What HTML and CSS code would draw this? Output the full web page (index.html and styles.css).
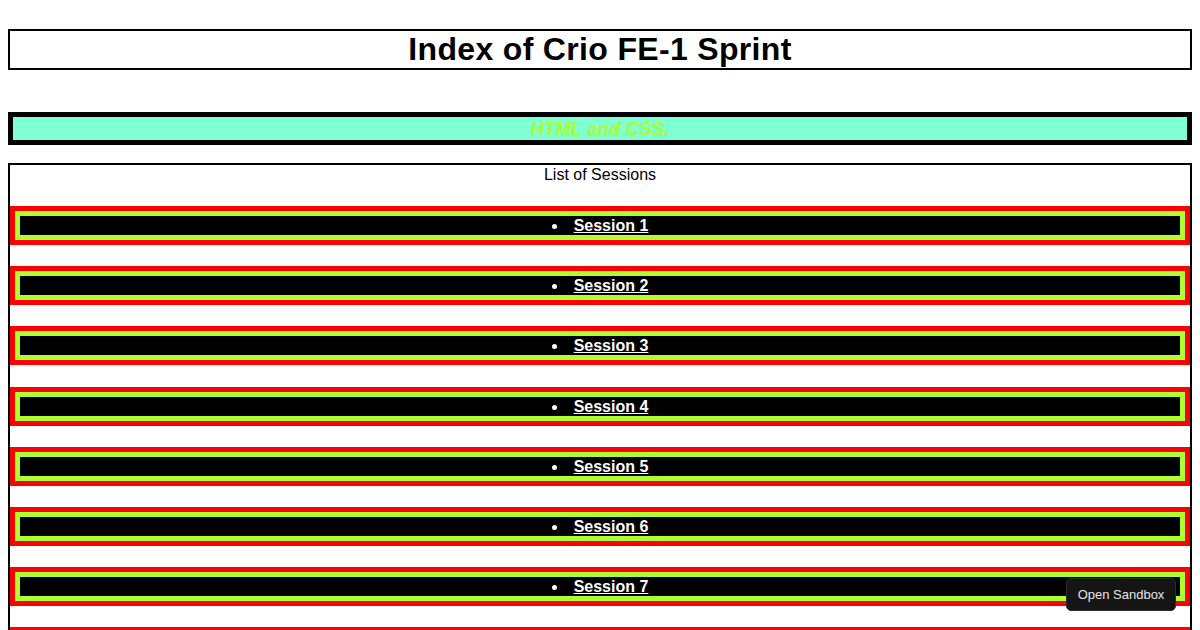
FILE: index.html
```html
<!DOCTYPE html>
<html>
<head>
  <meta charset="UTF-8">
  <title>Index of Crio FE-1 Sprint</title>
  <link rel="stylesheet" href="styles.css">
</head>
<body>
  <h1 class="title">Index of Crio FE-1 Sprint</h1>

  <h3 class="topic">HTML and CSS.</h3>

  <div class="sessions">
    List of Sessions
    <ul class="session-list">
      <li><a href="#">Session 1</a></li>
      <li><a href="#">Session 2</a></li>
      <li><a href="#">Session 3</a></li>
      <li><a href="#">Session 4</a></li>
      <li><a href="#">Session 5</a></li>
      <li><a href="#">Session 6</a></li>
      <li><a href="#">Session 7</a></li>
      <li><a href="#">Session 8</a></li>
    </ul>
  </div>

  <button class="sandbox-btn">Open Sandbox</button>
</body>
</html>
```

FILE: styles.css
```css
body {
  margin: 8px;
  font-family: 'Liberation Sans', Arial, sans-serif;
  font-size: 16px;
  color: black;
  background: white;
}

.title {
  margin: 21px 0 0;
  border: 2px solid black;
  font-size: 32px;
  line-height: 37px;
  letter-spacing: 0.33px;
  text-align: center;
}

.topic {
  margin: 42px 0 0;
  border: 5px solid black;
  background-color: aquamarine;
  color: greenyellow;
  font-size: 18.72px;
  font-style: italic;
  line-height: 23px;
  text-align: center;
}

.sessions {
  margin-top: 18px;
  border: 2px solid black;
  text-align: center;
  line-height: 19px;
}

.session-list {
  margin: 0;
  padding: 1px 0 0;
  list-style-position: inside;
}

.session-list li {
  margin: 21.17px 0;
  padding: 5px;
  border: 5px solid red;
  box-shadow: inset 0 0 0 5px greenyellow;
  background-color: black;
  color: white;
  font-weight: bold;
}

.session-list a {
  color: white;
}

.sandbox-btn {
  position: fixed;
  right: 24px;
  bottom: 19px;
  width: 110px;
  height: 33px;
  padding: 0;
  border: 1px solid #2e2e2e;
  border-radius: 5px;
  background-color: #151515;
  color: #e6e6e6;
  font-family: 'Liberation Sans', Arial, sans-serif;
  font-size: 13px;
}
```
